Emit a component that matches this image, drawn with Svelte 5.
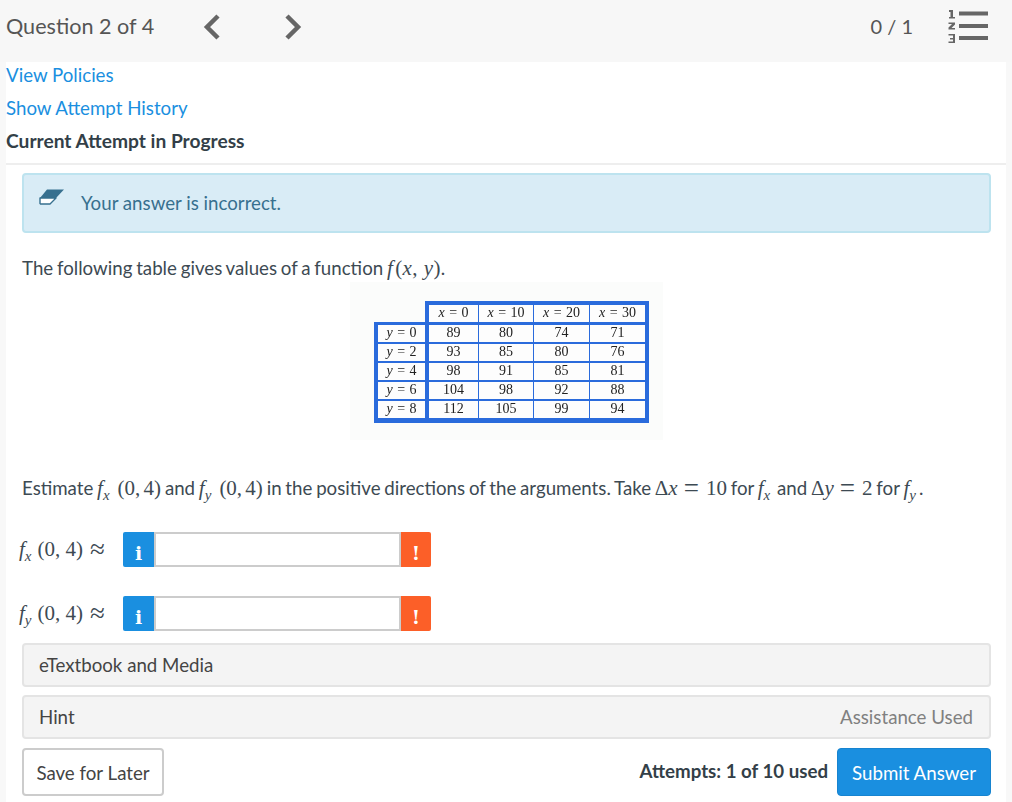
<script lang="ts">
  const heads = ['x = 0', 'x = 10', 'x = 20', 'x = 30'];
  const rows = [
    ['y = 0', 89, 80, 74, 71],
    ['y = 2', 93, 85, 80, 76],
    ['y = 4', 98, 91, 85, 81],
    ['y = 6', 104, 98, 92, 88],
    ['y = 8', 112, 105, 99, 94],
  ];
  const answers = [
    { sub: 'x' },
    { sub: 'y' },
  ];
</script>

<div class="page">
  <header class="topbar">
    <span class="title">Question 2 of 4</span>
    <svg class="chev first" width="18" height="28" viewBox="0 0 18 28"><path d="M15 3 L4 14 L15 25" fill="none" stroke="#666" stroke-width="4.5" /></svg>
    <svg class="chev" width="18" height="28" viewBox="0 0 18 28"><path d="M3 3 L14 14 L3 25" fill="none" stroke="#666" stroke-width="4.5" /></svg>
    <span class="score">0 / 1</span>
    <svg class="list" width="41" height="36" viewBox="0 0 41 36">
      <g fill="#666">
        <rect x="11" y="2.5" width="29" height="4" />
        <rect x="11" y="15" width="29" height="4" />
        <rect x="11" y="27" width="29" height="4" />
        <path d="M1 1h4v7h2v1.500H1V8h1.500V3H1zM0.500 13.500h6.500v2l-3.500 3.500h3.500v1.500H0.500v-2l3.500-3.500H0.500zM0.500 25h6.500v9H0.500v-1.500H5v-2H2v-1.500h3v-2.500H0.500z" />
      </g>
    </svg>
  </header>

  <main class="sheet">
    <div class="links">
      <span class="link">View Policies</span>
      <span class="link">Show Attempt History</span>
      <strong class="progress">Current Attempt in Progress</strong>
    </div>

    <div class="body">
      <div class="alert">
        <svg width="26" height="18" viewBox="0 0 26 18">
          <path d="M8 1.500h17L17 10H1z" fill="#37708f" />
          <path d="M1 10h16l-0.500 0.500L11 16H1.500L1 15.500z" fill="#fff" stroke="#37708f" stroke-width="1.400" stroke-linejoin="round" />
        </svg>
        <span>Your answer is incorrect.</span>
      </div>

      <p class="intro">The following table gives values of a function <span class="m"><i class="f">f</i>(<i>x</i>, <i>y</i>)</span>.</p>

      <div class="figure">
        <div class="tbl">
          <div class="head">
            {#each heads as h}
              <div class="cell"><i>{h[0]}</i>{h.slice(1)}</div>
            {/each}
          </div>
          <div class="grid">
            {#each rows as r}
              <div class="cell lead"><i>{r[0].slice(0, 1)}</i>{r[0].slice(1)}</div>
              {#each r.slice(1) as v}
                <div class="cell">{v}</div>
              {/each}
            {/each}
          </div>
        </div>
      </div>

      <p class="estimate">Estimate <span class="m"><i class="f">f<sub>x</sub></i><span class="args">(0, 4)</span></span> and <span class="m"><i class="f">f<sub>y</sub></i><span class="args">(0, 4)</span></span> in the positive directions of the arguments. Take <span class="m">Δ<i>x</i><span class="rel">=</span>10</span> for <span class="m"><i class="f">f<sub>x</sub></i></span> and <span class="m">Δ<i>y</i><span class="rel">=</span>2</span> for <span class="m"><i class="f">f<sub>y</sub></i></span>.</p>

      {#each answers as a}
        <div class="answer">
          <span class="label m"><i class="f">f<sub>{a.sub}</sub></i><span class="args">(0, 4)</span><span class="approx">≈</span></span>
          <div class="field">
            <span class="tag info">i</span>
            <span class="input"></span>
            <span class="tag warn">!</span>
          </div>
        </div>
      {/each}

      <div class="panel first-panel"><span>eTextbook and Media</span></div>
      <div class="panel"><span>Hint</span><span class="used">Assistance Used</span></div>

      <div class="actions">
        <button class="save">Save for Later</button>
        <strong class="attempts">Attempts: 1 of 10 used</strong>
        <button class="submit">Submit Answer</button>
      </div>
    </div>
  </main>
</div>

<style>
  :global(body) {
    background: #f8f8f8;
  }

  .page {
    font-family: Lato, sans-serif;
    font-size: 18.7px;
    color: #3d4a53;
    height: 802px;
    overflow: hidden;
  }

  .topbar {
    height: 62px;
    display: flex;
    align-items: center;
    padding: 0 23px 8px 6px;
    box-sizing: border-box;
    background: #f7f7f7;
  }

  .title {
    font-size: 21.6px;
    color: #555;
    width: 197px;
    margin-top: -2px;
  }

  .chev.first {
    margin-right: 63px;
  }

  .score {
    margin-left: auto;
    margin-right: 35px;
    font-size: 20px;
    color: #555;
    margin-top: -2px;
  }

  .sheet {
    margin: 0 6px;
    background: #fff;
    height: 740px;
  }

  .links {
    display: flex;
    flex-direction: column;
    align-items: flex-start;
    height: 101px;
    border-bottom: 2px solid #eee;
    line-height: 33px;
  }

  .link {
    color: #1a8fe0;
    position: relative;
    top: -3px;
  }

  .progress {
    color: #333f48;
    font-weight: 700;
    font-size: 19.2px;
    position: relative;
    top: -4px;
  }

  .body {
    padding: 8px 15px 0 16px;
  }

  .alert {
    height: 60px;
    box-sizing: border-box;
    background: #d9ecf6;
    border: 2px solid #bde3ef;
    border-radius: 4px;
    display: flex;
    align-items: flex-start;
    padding: 13px 0 0 15px;
    color: #37708f;
    gap: 16px;
  }

  .alert span {
    margin-top: 4px;
  }

  .m {
    font-family: 'Liberation Serif', serif;
    font-size: 21px;
    word-spacing: normal;
  }

  .f {
    padding-right: 2px;
  }

  .m sub {
    font-size: 15px;
    line-height: 0;
    vertical-align: -5px;
    padding-right: 1px;
  }

  .args {
    margin-left: 3px;
  }

  .estimate .args {
    margin-left: 5px;
    word-spacing: -2px;
  }

  .rel {
    font-size: 27px;
    line-height: 0;
    margin: 0 7px 0 6px;
    vertical-align: -2px;
  }

  .approx {
    font-size: 27px;
    line-height: 0;
    margin-left: 7px;
    vertical-align: -2px;
  }

  p {
    margin: 0;
    word-spacing: -1px;
  }

  .intro {
    margin-top: 22px;
    line-height: 27px;
  }

  .intro .m {
    letter-spacing: 0.4px;
  }

  .figure {
    width: 313px;
    height: 158px;
    margin-left: 328px;
    background: #fbfcfb;
    display: flex;
    justify-content: flex-start;
    padding: 19px 0 0 24px;
    box-sizing: border-box;
  }

  .tbl {
    display: flex;
    flex-direction: column;
    align-items: flex-end;
    width: 275px;
    font-family: 'Liberation Serif', serif;
    font-size: 14px;
    word-spacing: 1px;
    color: #222;
    filter: blur(0.4px);
  }

  .head,
  .grid {
    display: grid;
    background: #2a6bdc;
    column-gap: 1px;
  }

  .head {
    grid-template-columns: 49px 54px 55px 55px;
    padding: 4px 4px 0 4px;
  }

  .grid {
    grid-template-columns: 50px 49px 54px 55px 55px;
    padding: 3px 4px 5px 4px;
    row-gap: 2px;
    width: 100%;
    box-sizing: border-box;
  }

  .cell {
    background: #fdfdfd;
    text-align: center;
    height: 17px;
    line-height: 16px;
  }

  .cell.lead {
    margin-right: 3px;
  }

  .estimate {
    margin-top: 35px;
    line-height: 27px;
  }

  .answer {
    display: flex;
    align-items: center;
    height: 35px;
    margin-top: 29px;
  }

  .estimate + .answer {
    margin-top: 30px;
  }

  .label {
    width: 104px;
    margin-left: -3px;
    white-space: nowrap;
  }

  .field {
    display: flex;
    width: 308px;
    height: 35px;
  }

  .tag {
    width: 31px;
    color: #fff;
    font-family: 'DejaVu Serif', serif;
    font-weight: 700;
    font-size: 19px;
    display: flex;
    align-items: center;
    justify-content: center;
    padding-top: 6px;
    box-sizing: border-box;
  }

  .info {
    background: #1a8fe0;
    border-radius: 2px 0 0 2px;
  }

  .warn {
    width: 30px;
    background: #fc5f28;
    border-radius: 0 2px 2px 0;
  }

  .input {
    flex: 1;
    box-sizing: border-box;
    background: #fff;
    border: 2px solid #ccc;
  }

  .panel {
    height: 44px;
    box-sizing: border-box;
    margin-top: 8px;
    padding: 0 16px 0 15px;
    background: #f4f4f4;
    border: 2px solid #e4e4e4;
    border-radius: 4px;
    display: flex;
    align-items: center;
    justify-content: space-between;
    color: #444;
  }

  .first-panel {
    margin-top: 12px;
  }

  .used {
    color: #808080;
  }

  .actions {
    display: flex;
    align-items: center;
    margin-top: 9px;
  }

  button {
    font: inherit;
    height: 48px;
    box-sizing: border-box;
    border-radius: 4px;
    padding-top: 2px;
  }

  .save {
    width: 142px;
    background: #fff;
    border: 2px solid #ccc;
    color: #444;
  }

  .attempts {
    margin-left: auto;
    margin-right: 9px;
    margin-top: -2px;
    color: #333f48;
  }

  .submit {
    width: 154px;
    background: #1a8fe0;
    border: 1px solid #1784d0;
    color: #fff;
  }
</style>
